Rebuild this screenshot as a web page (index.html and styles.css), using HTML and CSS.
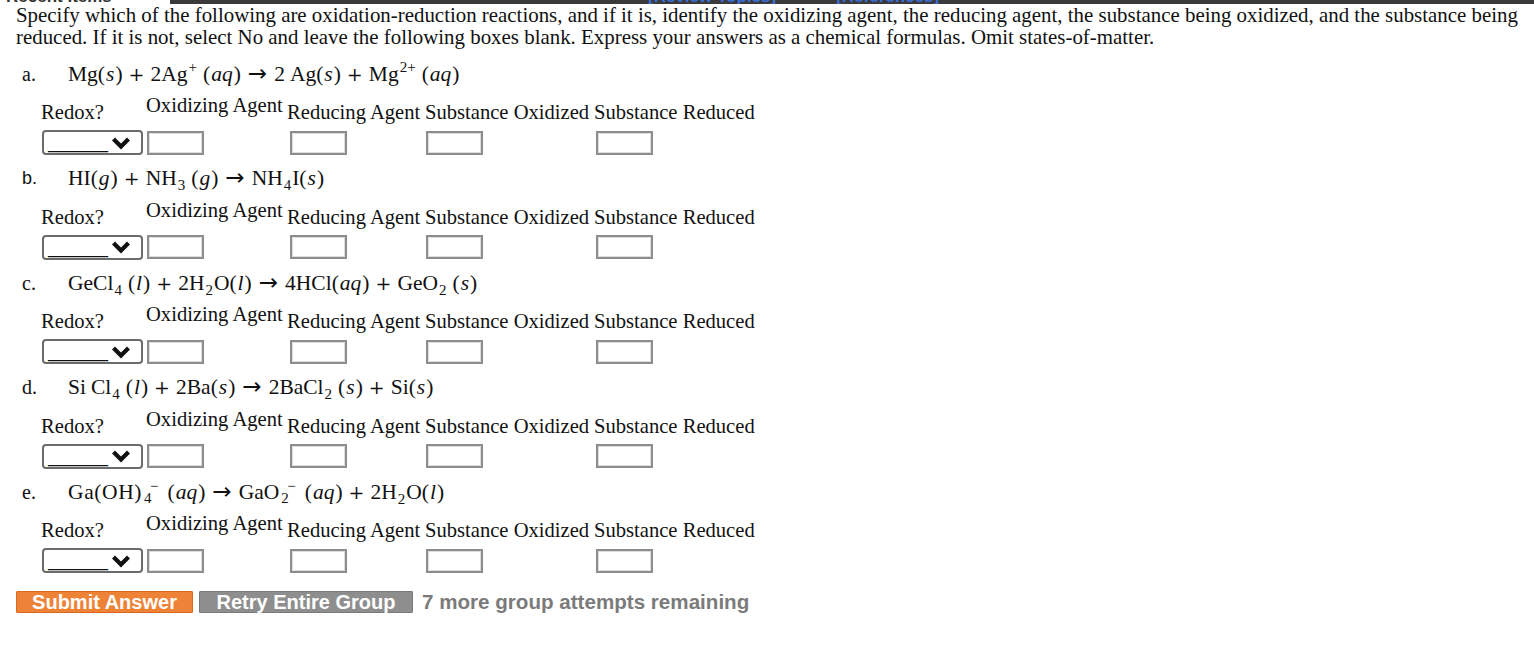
FILE: index.html
```html
<!DOCTYPE html>
<html>
<head>
<meta charset="utf-8">
<link rel="stylesheet" href="styles.css">
</head>
<body>
<header class="topbar">
  <div class="topbar-inner">
    <span class="recent">Recent Items</span>
    <span class="rule">
      <span class="toplink">[Review Topics]</span>
      <span class="toplink">[References]</span>
    </span>
  </div>
</header>
<main class="page">
  <p class="intro">Specify which of the following are oxidation-reduction reactions, and if it is, identify the oxidizing agent, the reducing agent, the substance being oxidized, and the substance being reduced. If it is not, select No and leave the following boxes blank. Express your answers as a chemical formulas. Omit states-of-matter.</p>

  <section class="part">
    <div class="eq-row"><span class="letter">a.</span><span class="eq">Mg(<i>s</i>)<span class="op">+</span>2Ag<sup>+</sup><span class="gap"></span>(<i>aq</i>)<span class="arrow">→</span>2<span class="thin"></span>Ag(<i>s</i>)<span class="op">+</span>Mg<sup>2+</sup><span class="gap"></span>(<i>aq</i>)</span></div>
    <div class="labels"><span class="lbl low">Redox?</span><span class="lbl high">Oxidizing Agent</span><span class="lbl low">Reducing Agent</span><span class="lbl low">Substance Oxidized</span><span class="lbl low">Substance Reduced</span></div>
    <div class="inputs"><div class="select"><span class="blank">______</span><svg class="chev" viewBox="0 0 20 14" width="20" height="14"><path d="M2.5 3 L10 10.5 L17.5 3" fill="none" stroke="#111" stroke-width="4.2"/></svg></div><span class="box"></span><span class="box"></span><span class="box"></span><span class="box"></span></div>
  </section>

  <section class="part">
    <div class="eq-row"><span class="letter sans">b.</span><span class="eq">HI(<i>g</i>)<span class="op">+</span>NH<sub>3</sub><span class="gap"></span>(<i>g</i>)<span class="arrow">→</span>NH<sub>4</sub>I(<i>s</i>)</span></div>
    <div class="labels"><span class="lbl low">Redox?</span><span class="lbl high">Oxidizing Agent</span><span class="lbl low">Reducing Agent</span><span class="lbl low">Substance Oxidized</span><span class="lbl low">Substance Reduced</span></div>
    <div class="inputs"><div class="select"><span class="blank">______</span><svg class="chev" viewBox="0 0 20 14" width="20" height="14"><path d="M2.5 3 L10 10.5 L17.5 3" fill="none" stroke="#111" stroke-width="4.2"/></svg></div><span class="box"></span><span class="box"></span><span class="box"></span><span class="box"></span></div>
  </section>

  <section class="part">
    <div class="eq-row"><span class="letter">c.</span><span class="eq">GeCl<sub>4</sub><span class="gap"></span>(<i>l</i>)<span class="op">+</span>2H<sub>2</sub>O(<i>l</i>)<span class="arrow">→</span>4HCl(<i>aq</i>)<span class="op">+</span>GeO<sub>2</sub><span class="gap"></span>(<i>s</i>)</span></div>
    <div class="labels"><span class="lbl low">Redox?</span><span class="lbl high">Oxidizing Agent</span><span class="lbl low">Reducing Agent</span><span class="lbl low">Substance Oxidized</span><span class="lbl low">Substance Reduced</span></div>
    <div class="inputs"><div class="select"><span class="blank">______</span><svg class="chev" viewBox="0 0 20 14" width="20" height="14"><path d="M2.5 3 L10 10.5 L17.5 3" fill="none" stroke="#111" stroke-width="4.2"/></svg></div><span class="box"></span><span class="box"></span><span class="box"></span><span class="box"></span></div>
  </section>

  <section class="part">
    <div class="eq-row"><span class="letter">d.</span><span class="eq">Si<span class="thin"></span>Cl<sub>4</sub><span class="gap"></span>(<i>l</i>)<span class="op">+</span>2Ba(<i>s</i>)<span class="arrow">→</span>2BaCl<sub>2</sub><span class="gap"></span>(<i>s</i>)<span class="op">+</span>Si(<i>s</i>)</span></div>
    <div class="labels"><span class="lbl low">Redox?</span><span class="lbl high">Oxidizing Agent</span><span class="lbl low">Reducing Agent</span><span class="lbl low">Substance Oxidized</span><span class="lbl low">Substance Reduced</span></div>
    <div class="inputs"><div class="select"><span class="blank">______</span><svg class="chev" viewBox="0 0 20 14" width="20" height="14"><path d="M2.5 3 L10 10.5 L17.5 3" fill="none" stroke="#111" stroke-width="4.2"/></svg></div><span class="box"></span><span class="box"></span><span class="box"></span><span class="box"></span></div>
  </section>

  <section class="part">
    <div class="eq-row"><span class="letter">e.</span><span class="eq"><span class="big">Ga(OH)</span><span class="subsup"><span class="ss-sup">−</span><span class="ss-sub">4</span></span><span class="gap wide"></span>(<i>aq</i>)<span class="arrow">→</span>GaO<span class="subsup"><span class="ss-sup">−</span><span class="ss-sub">2</span></span><span class="gap wide"></span>(<i>aq</i>)<span class="op">+</span>2H<sub>2</sub>O(<i>l</i>)</span></div>
    <div class="labels"><span class="lbl low">Redox?</span><span class="lbl high">Oxidizing Agent</span><span class="lbl low">Reducing Agent</span><span class="lbl low">Substance Oxidized</span><span class="lbl low">Substance Reduced</span></div>
    <div class="inputs"><div class="select"><span class="blank">______</span><svg class="chev" viewBox="0 0 20 14" width="20" height="14"><path d="M2.5 3 L10 10.5 L17.5 3" fill="none" stroke="#111" stroke-width="4.2"/></svg></div><span class="box"></span><span class="box"></span><span class="box"></span><span class="box"></span></div>
  </section>

  <div class="actions">
    <button class="btn btn-submit">Submit Answer</button>
    <button class="btn btn-retry">Retry Entire Group</button>
    <span class="attempts">7 more group attempts remaining</span>
  </div>
</main>
</body>
</html>
```

FILE: styles.css
```css
html, body {
  margin: 0;
  padding: 0;
  background: #fff;
}
body {
  font-family: "Liberation Serif", "Times New Roman", serif;
  color: #111;
}
.topbar {
  height: 4px;
  overflow: hidden;
}
.topbar-inner {
  display: flex;
  align-items: flex-end;
  height: 4px;
}
.recent {
  flex: none;
  width: 170px;
  padding-left: 6px;
  box-sizing: border-box;
  font-family: "Liberation Sans", Arial, sans-serif;
  font-weight: bold;
  font-size: 17px;
  line-height: 14px;
  color: #333;
  white-space: nowrap;
}
.rule {
  flex: 1;
  height: 4px;
  background: #3a3a3a;
  display: flex;
  align-items: flex-end;
  padding-left: 478px;
  gap: 60px;
}
.toplink {
  font-family: "Liberation Sans", Arial, sans-serif;
  font-weight: bold;
  font-size: 17px;
  line-height: 14px;
  color: #3b6fd6;
  white-space: nowrap;
}
.page {
  padding: 0 16px;
}
.intro {
  margin: 0;
  font-size: 20.9px;
  line-height: 22px;
}
.part {
  display: flex;
  flex-direction: column;
}
.eq-row {
  display: flex;
  align-items: center;
  height: 30px;
  margin-top: 11px;
  padding-left: 6px;
  font-size: 20px;
}
.part + .part .eq-row {
  margin-top: 8.5px;
}
.letter {
  width: 46px;
  flex: none;
}
.letter.sans {
  font-family: "Liberation Sans", Arial, sans-serif;
  font-size: 18px;
}
.eq {
  font-family: "Liberation Serif", "Times New Roman", serif;
  font-size: 21.5px;
  white-space: nowrap;
}
.eq i {
  font-style: italic;
  padding: 0 1px;
}
.big {
  letter-spacing: 0.6px;
}
.op {
  display: inline-block;
  padding: 0 6px;
  font-family: "DejaVu Serif", serif;
  font-size: 19px;
}
.arrow {
  display: inline-block;
  padding: 0 7px;
  font-family: "DejaVu Sans", sans-serif;
  font-size: 23px;
  line-height: 20px;
}
.gap {
  display: inline-block;
  width: 5px;
}
.gap.wide {
  width: 9px;
}
.thin {
  display: inline-block;
  width: 5px;
}
.eq sup, .eq sub {
  font-size: 15px;
  line-height: 0;
  padding: 0 1px;
}
.subsup {
  display: inline-flex;
  flex-direction: column;
  vertical-align: 8px;
  font-size: 15px;
  line-height: 12px;
  margin-left: 2px;
}
.ss-sup {
  padding-left: 6px;
}
.labels {
  display: grid;
  grid-template-columns: 105px 141px 138px 169px auto;
  height: 26px;
  margin-top: 7px;
  padding-left: 25px;
  font-size: 20.6px;
  white-space: nowrap;
}
.lbl.low {
  align-self: end;
  line-height: 20px;
}
.lbl.high {
  align-self: start;
  line-height: 20px;
  margin-top: -1px;
}
.inputs {
  display: grid;
  grid-template-columns: 105px 143px 136px 170px auto;
  align-items: center;
  margin-top: 8px;
  padding-left: 26px;
}
.select {
  width: 101px;
  height: 25px;
  box-sizing: border-box;
  border: 2px solid #6b6b6b;
  border-radius: 4px;
  display: flex;
  align-items: center;
  justify-content: space-between;
  padding: 0 10px 0 4px;
  font-size: 20px;
}
.blank {
  line-height: 20px;
  align-self: flex-end;
  margin-bottom: 1px;
  color: #111;
}
.chev {
  display: block;
}
.box {
  width: 57px;
  height: 24px;
  box-sizing: border-box;
  border: 2px solid #8d8d8d;
  box-shadow: inset 0 0 0 1px #dedede;
  background: #fff;
}
.actions {
  display: flex;
  align-items: center;
  gap: 6px;
  margin-top: 17px;
  font-family: "Liberation Sans", Arial, sans-serif;
}
.btn {
  font-family: "Liberation Sans", Arial, sans-serif;
  font-weight: bold;
  font-size: 20px;
  line-height: 18px;
  height: 22px;
  padding: 0;
  margin: 0;
  color: #fff;
  border-radius: 1px;
  cursor: pointer;
}
.btn-submit {
  width: 177px;
  background: #ee8236;
  border: 1px solid #d96a1e;
}
.btn-retry {
  width: 214px;
  background: #8e8e8e;
  border: 1px solid #7a7a7a;
}
.attempts {
  margin-left: 3px;
  font-weight: bold;
  font-size: 20.6px;
  color: #7b7b7b;
}
```
